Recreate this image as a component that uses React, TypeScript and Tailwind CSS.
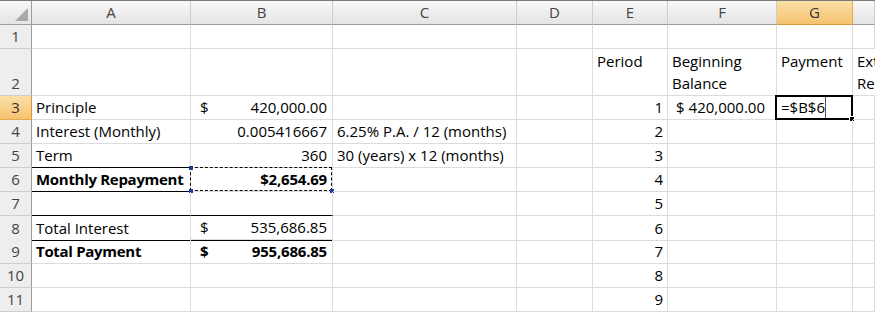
import React from "react";

const COLS = "grid grid-cols-[32px_159px_142px_184px_76px_75px_109px_76px_1fr]";
const FONT = { fontFamily: '"Open Sans", "Liberation Sans", sans-serif' };

const Hdr = ({ label, active }: { label: string; active?: boolean }) => (
  <div
    className={
      "flex h-full items-center justify-center border-r border-b text-[15px] " +
      (active
        ? "border-r-[#e3a94b] border-b-[#d99a33] bg-linear-to-b from-[#fbe0a8] to-[#f6c36e] text-[#333]"
        : "border-r-[#cdcdcd] border-b-[#9c9c9c] bg-linear-to-b from-[#f8f8f8] to-[#e4e4e4] text-[#444]")
    }
  >
    {label}
  </div>
);

const RowHdr = ({ n, active }: { n: number; active?: boolean }) => (
  <div
    className={
      "flex h-full items-end justify-center border-r border-b pb-[1px] text-[15px] leading-[22px] " +
      (active
        ? "border-r-[#d99a33] border-b-[#e3a94b] bg-linear-to-b from-[#fbe0a8] to-[#f6c36e] text-[#333]"
        : "border-r-[#9c9c9c] border-b-[#cdcdcd] bg-[#eeeeee] text-[#444]")
    }
  >
    {n}
  </div>
);

type CellProps = {
  children?: React.ReactNode;
  className?: string;
};

const Cell = ({ children, className = "" }: CellProps) => (
  <div
    className={
      "relative flex h-full items-end overflow-visible whitespace-nowrap border-r border-b border-[#dadcdd] pb-[1px] text-[15px] leading-[22px] text-black " +
      className
    }
  >
    {children}
  </div>
);

const Acct = ({ value, bold }: { value: string; bold?: boolean }) => (
  <Cell className={"justify-between pl-[9px] pr-[5px] " + (bold ? "font-bold tracking-[-0.2px]" : "")}>
    <span>$</span>
    <span>{value}</span>
  </Cell>
);

const Empty = ({ n }: { n: number }) => (
  <>
    {Array.from({ length: n }).map((_, i) => (
      <Cell key={i} />
    ))}
  </>
);

const Period = ({ n }: { n: number }) => <Cell className="justify-end pr-[4px]">{n}</Cell>;

export default function App() {
  return (
    <div className="h-[315px] w-[875px] overflow-hidden border-t border-[#7a7a7a] bg-white" style={FONT}>
      {/* column headers */}
      <div className={COLS + " h-[24px]"}>
        <div className="relative border-r border-b border-r-[#9c9c9c] border-b-[#9c9c9c] bg-linear-to-b from-[#f8f8f8] to-[#e4e4e4]">
          <div className="absolute right-[3px] bottom-[3px] h-0 w-0 border-b-[13px] border-l-[13px] border-b-[#a9a9a9] border-l-transparent" />
        </div>
        <Hdr label="A" />
        <Hdr label="B" />
        <Hdr label="C" />
        <Hdr label="D" />
        <Hdr label="E" />
        <Hdr label="F" />
        <Hdr label="G" active />
        <Hdr label="" />
      </div>

      {/* row 1 */}
      <div className={COLS + " h-[24px]"}>
        <RowHdr n={1} />
        <Empty n={8} />
      </div>

      {/* row 2 */}
      <div className={COLS + " h-[47px]"}>
        <RowHdr n={2} />
        <Empty n={3} />
        <Cell />
        <Cell className="pl-[4px]">
          <div>
            Period
            <br />
            &nbsp;
          </div>
        </Cell>
        <Cell className="pl-[4px]">
          <div>
            Beginning
            <br />
            Balance
          </div>
        </Cell>
        <Cell className="pl-[4px]">
          <div>
            Payment
            <br />
            &nbsp;
          </div>
        </Cell>
        <Cell className="pl-[4px]">
          <div>
            Ext
            <br />
            Re
          </div>
        </Cell>
      </div>

      {/* row 3 */}
      <div className={COLS + " h-[24px]"}>
        <RowHdr n={3} active />
        <Cell className="pl-[4px]">Principle</Cell>
        <Acct value="420,000.00" />
        <Cell />
        <Cell />
        <Period n={1} />
        <Cell className="justify-end pr-[11px]">$ 420,000.00</Cell>
        <Cell className="pl-[4px] text-[#2b2b9c]">
          =$B$6
          <div className="absolute top-0 bottom-0 left-[48px] w-px bg-[#555]" />
          <div className="absolute -top-px -left-[2px] -right-px -bottom-px border-2 border-black" />
          <div className="absolute -right-[3px] -bottom-[3px] h-[6px] w-[6px] border border-white bg-black" />
        </Cell>
        <Cell />
      </div>

      {/* row 4 */}
      <div className={COLS + " h-[24px]"}>
        <RowHdr n={4} />
        <Cell className="pl-[4px]">Interest (Monthly)</Cell>
        <Cell className="justify-end pr-[5px]">0.005416667</Cell>
        <Cell className="pl-[4px]">6.25% P.A. / 12 (months)</Cell>
        <Cell />
        <Period n={2} />
        <Empty n={3} />
      </div>

      {/* row 5 */}
      <div className={COLS + " h-[24px]"}>
        <RowHdr n={5} />
        <Cell className="pl-[4px]">Term</Cell>
        <Cell className="justify-end pr-[5px]">360</Cell>
        <Cell className="pl-[4px]">30 (years) x 12 (months)</Cell>
        <Cell />
        <Period n={3} />
        <Empty n={3} />
      </div>

      {/* row 6 */}
      <div className={COLS + " h-[24px]"}>
        <RowHdr n={6} />
        <Cell className="border-b-black pl-[4px] font-bold tracking-[-0.3px] before:absolute before:-top-px before:right-0 before:left-0 before:h-px before:bg-black">
          Monthly Repayment
        </Cell>
        <Cell className="justify-end pr-[5px] font-bold tracking-[-0.2px]">
          $2,654.69
          <div className="absolute -top-px -left-px right-0 bottom-0 border border-dashed border-black" />
          <div className="absolute -top-[2px] -left-[2px] h-[4px] w-[4px] bg-[#1f3a9a]" />
          <div className="absolute -bottom-[2px] -left-[2px] h-[4px] w-[4px] bg-[#1f3a9a]" />
          <div className="absolute -right-[2px] -bottom-[2px] h-[4px] w-[4px] bg-[#1f3a9a]" />
        </Cell>
        <Cell />
        <Cell />
        <Period n={4} />
        <Empty n={3} />
      </div>

      {/* row 7 */}
      <div className={COLS + " h-[24px]"}>
        <RowHdr n={7} />
        <Cell className="border-b-black" />
        <Cell className="border-b-black" />
        <Cell />
        <Cell />
        <Period n={5} />
        <Empty n={3} />
      </div>

      {/* row 8 */}
      <div className={COLS + " h-[24px]"}>
        <RowHdr n={8} />
        <Cell className="border-b-black pl-[4px]">Total Interest</Cell>
        <div className="h-full border-b border-black">
          <Acct value="535,686.85" />
        </div>
        <Cell />
        <Cell />
        <Period n={6} />
        <Empty n={3} />
      </div>

      {/* row 9 */}
      <div className={COLS + " h-[24px]"}>
        <RowHdr n={9} />
        <Cell className="pl-[4px] font-bold tracking-[-0.3px]">Total Payment</Cell>
        <Acct value="955,686.85" bold />
        <Cell />
        <Cell />
        <Period n={7} />
        <Empty n={3} />
      </div>

      {/* row 10 */}
      <div className={COLS + " h-[24px]"}>
        <RowHdr n={10} />
        <Empty n={3} />
        <Cell />
        <Period n={8} />
        <Empty n={3} />
      </div>

      {/* row 11 */}
      <div className={COLS + " h-[24px]"}>
        <RowHdr n={11} />
        <Empty n={3} />
        <Cell />
        <Period n={9} />
        <Empty n={3} />
      </div>
    </div>
  );
}
